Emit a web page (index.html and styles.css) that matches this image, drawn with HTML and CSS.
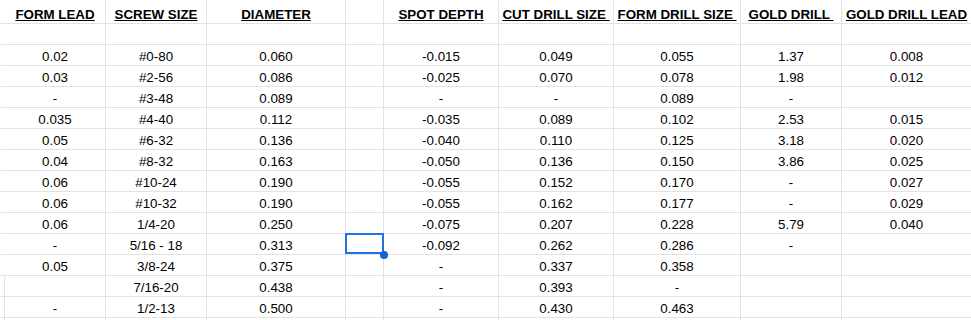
FILE: index.html
```html
<!DOCTYPE html>
<html>
<head>
<meta charset="utf-8">
<link rel="stylesheet" href="styles.css">
</head>
<body>
<div class="sheet">
  <div class="row head">
    <div class="c pre"></div>
    <div class="c"><u>FORM LEAD</u></div>
    <div class="c"><u>SCREW SIZE</u></div>
    <div class="c"><u>DIAMETER</u></div>
    <div class="c"></div>
    <div class="c"><u>SPOT DEPTH</u></div>
    <div class="c"><u>CUT DRILL SIZE </u></div>
    <div class="c"><u>FORM DRILL SIZE </u></div>
    <div class="c"><u>GOLD DRILL </u></div>
    <div class="c"><u>GOLD DRILL LEAD</u></div>
  </div>
  <div class="row"><div class="c pre"></div><div class="c"></div><div class="c"></div><div class="c"></div><div class="c"></div><div class="c"></div><div class="c"></div><div class="c"></div><div class="c"></div><div class="c"></div></div>
  <div class="row"><div class="c pre"></div><div class="c">0.02</div><div class="c">#0-80</div><div class="c">0.060</div><div class="c"></div><div class="c">-0.015</div><div class="c">0.049</div><div class="c">0.055</div><div class="c">1.37</div><div class="c">0.008</div></div>
  <div class="row"><div class="c pre"></div><div class="c">0.03</div><div class="c">#2-56</div><div class="c">0.086</div><div class="c"></div><div class="c">-0.025</div><div class="c">0.070</div><div class="c">0.078</div><div class="c">1.98</div><div class="c">0.012</div></div>
  <div class="row"><div class="c pre"></div><div class="c">-</div><div class="c">#3-48</div><div class="c">0.089</div><div class="c"></div><div class="c">-</div><div class="c">-</div><div class="c">0.089</div><div class="c">-</div><div class="c"></div></div>
  <div class="row"><div class="c pre"></div><div class="c">0.035</div><div class="c">#4-40</div><div class="c">0.112</div><div class="c"></div><div class="c">-0.035</div><div class="c">0.089</div><div class="c">0.102</div><div class="c">2.53</div><div class="c">0.015</div></div>
  <div class="row"><div class="c pre"></div><div class="c">0.05</div><div class="c">#6-32</div><div class="c">0.136</div><div class="c"></div><div class="c">-0.040</div><div class="c">0.110</div><div class="c">0.125</div><div class="c">3.18</div><div class="c">0.020</div></div>
  <div class="row"><div class="c pre"></div><div class="c">0.04</div><div class="c">#8-32</div><div class="c">0.163</div><div class="c"></div><div class="c">-0.050</div><div class="c">0.136</div><div class="c">0.150</div><div class="c">3.86</div><div class="c">0.025</div></div>
  <div class="row"><div class="c pre"></div><div class="c">0.06</div><div class="c">#10-24</div><div class="c">0.190</div><div class="c"></div><div class="c">-0.055</div><div class="c">0.152</div><div class="c">0.170</div><div class="c">-</div><div class="c">0.027</div></div>
  <div class="row"><div class="c pre"></div><div class="c">0.06</div><div class="c">#10-32</div><div class="c">0.190</div><div class="c"></div><div class="c">-0.055</div><div class="c">0.162</div><div class="c">0.177</div><div class="c">-</div><div class="c">0.029</div></div>
  <div class="row"><div class="c pre"></div><div class="c">0.06</div><div class="c">1/4-20</div><div class="c">0.250</div><div class="c"></div><div class="c">-0.075</div><div class="c">0.207</div><div class="c">0.228</div><div class="c">5.79</div><div class="c">0.040</div></div>
  <div class="row"><div class="c pre"></div><div class="c">-</div><div class="c">5/16 - 18</div><div class="c">0.313</div><div class="c sel"><span class="selbox"></span><span class="handle"></span></div><div class="c">-0.092</div><div class="c">0.262</div><div class="c">0.286</div><div class="c">-</div><div class="c"></div></div>
  <div class="row"><div class="c pre"></div><div class="c">0.05</div><div class="c">3/8-24</div><div class="c">0.375</div><div class="c"></div><div class="c">-</div><div class="c">0.337</div><div class="c">0.358</div><div class="c"></div><div class="c"></div></div>
  <div class="row"><div class="c pre edge"></div><div class="c"></div><div class="c">7/16-20</div><div class="c">0.438</div><div class="c"></div><div class="c">-</div><div class="c">0.393</div><div class="c">-</div><div class="c"></div><div class="c"></div></div>
  <div class="row"><div class="c pre edge"></div><div class="c">-</div><div class="c">1/2-13</div><div class="c">0.500</div><div class="c"></div><div class="c">-</div><div class="c">0.430</div><div class="c">0.463</div><div class="c"></div><div class="c"></div></div>
  <div class="row"><div class="c pre edge"></div><div class="c"></div><div class="c"></div><div class="c"></div><div class="c"></div><div class="c"></div><div class="c"></div><div class="c"></div><div class="c"></div><div class="c"></div></div>
</div>
</body>
</html>
```
FILE: styles.css
```css
html, body {
  margin: 0;
  padding: 0;
  background: #ffffff;
  overflow: hidden;
}
.sheet {
  width: 972px;
  font-family: "Liberation Sans", Arial, sans-serif;
  font-size: 13.33px;
  color: #000000;
}
.row {
  display: grid;
  grid-template-columns: 5px 101px 101px 139px 38px 115px 115px 127px 101px 130px;
  height: 21px;
}
.row.head {
  height: 24px;
}
.c {
  box-sizing: border-box;
  height: 100%;
  border-right: 1px solid #e2e2e2;
  border-bottom: 1px solid #e2e2e2;
  padding-top: 4px;
  line-height: 15px;
  text-align: center;
  white-space: pre;
  overflow: visible;
}
.head .c {
  padding-top: 7px;
  font-weight: bold;
}
.head u {
  text-decoration: underline;
  text-underline-offset: 1px;
}
.c.pre {
  border-right-color: transparent;
}
.c.pre.edge {
  border-right-color: #e2e2e2;
}
.sel {
  position: relative;
}
.selbox {
  position: absolute;
  left: -1px;
  top: -1px;
  width: 39px;
  height: 21px;
  box-sizing: border-box;
  border: 2px solid #1a73e8;
}
.handle {
  position: absolute;
  left: 34px;
  top: 17px;
  width: 8px;
  height: 8px;
  border-radius: 50%;
  background: #1a5fd6;
}
```
